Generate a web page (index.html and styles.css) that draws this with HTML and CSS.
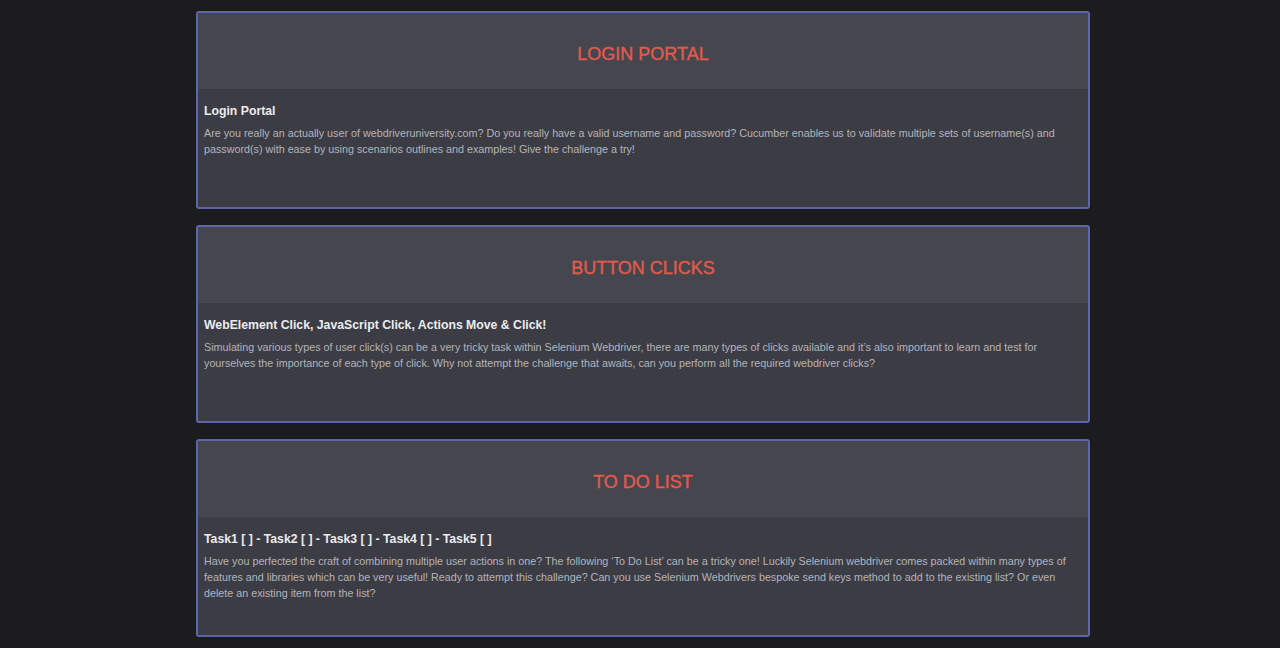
FILE: index.html
```html
<!DOCTYPE html>
<html>
<head>
<meta charset="utf-8">
<link rel="stylesheet" href="styles.css">
</head>
<body>
<main class="list">
  <section class="card">
    <header class="card-head"><h1>LOGIN PORTAL</h1></header>
    <div class="card-body">
      <h2>Login Portal</h2>
      <p>Are you really an actually user of webdriveruniversity.com? Do you really have a valid username and password? Cucumber enables us to validate multiple sets of username(s) and password(s) with ease by using scenarios outlines and examples! Give the challenge a try!</p>
    </div>
  </section>
  <section class="card">
    <header class="card-head"><h1>BUTTON CLICKS</h1></header>
    <div class="card-body">
      <h2>WebElement Click, JavaScript Click, Actions Move &amp; Click!</h2>
      <p>Simulating various types of user click(s) can be a very tricky task within Selenium Webdriver, there are many types of clicks available and it’s also important to learn and test for yourselves the importance of each type of click. Why not attempt the challenge that awaits, can you perform all the required webdriver clicks?</p>
    </div>
  </section>
  <section class="card">
    <header class="card-head"><h1>TO DO LIST</h1></header>
    <div class="card-body">
      <h2>Task1 [ ] - Task2 [ ] - Task3 [ ] - Task4 [ ] - Task5 [ ]</h2>
      <p>Have you perfected the craft of combining multiple user actions in one? The following ‘To Do List’ can be a tricky one! Luckily Selenium webdriver comes packed within many types of features and libraries which can be very useful! Ready to attempt this challenge? Can you use Selenium Webdrivers bespoke send keys method to add to the existing list? Or even delete an existing item from the list?</p>
    </div>
  </section>
</main>
</body>
</html>
```

FILE: styles.css
```css
html, body {
  margin: 0;
  padding: 0;
  background: #1c1c1e;
  font-family: "Liberation Sans", Arial, sans-serif;
}

body {
  padding-left: 6px;
}

.list {
  width: 894px;
  margin: 0 auto;
  padding-top: 10.5px;
  display: flex;
  flex-direction: column;
  gap: 16px;
}

.card {
  height: 198px;
  box-sizing: border-box;
  border: 2px solid #5e66aa;
  border-radius: 3px;
  background: #3c3c45;
  display: flex;
  flex-direction: column;
  overflow: hidden;
}

.card-head {
  height: 76px;
  flex: none;
  box-sizing: border-box;
  padding-top: 8px;
  background: #46464f;
  display: flex;
  align-items: center;
  justify-content: center;
}

.card-head h1 {
  margin: 0;
  font-size: 18px;
  font-weight: normal;
  color: #e35a4b;
  -webkit-text-stroke: 0.35px #e35a4b;
}

.card-body {
  padding: 14px 6px 0 6px;
}

.card-body h2 {
  margin: 0 0 5px 0;
  font-size: 12.25px;
  line-height: 17px;
  font-weight: bold;
  color: #ececef;
}

.card-body p {
  margin: 0;
  font-size: 10.75px;
  line-height: 16px;
  color: #b4b4ba;
}
```
